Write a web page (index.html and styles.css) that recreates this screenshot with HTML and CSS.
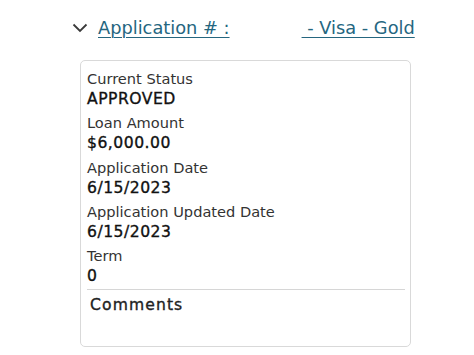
FILE: index.html
```html
<!DOCTYPE html>
<html lang="en">
<head>
    <meta charset="UTF-8">
    <meta name="viewport" content="width=device-width, initial-scale=1.0">
    <title>Application</title>
    <link rel="stylesheet" href="styles.css">
</head>
<body>
    <div class="page">
        <div class="app-header">
            <svg class="chevron" width="16" height="10" viewBox="0 0 16 10">
                <path d="M1.5 1.5 L8 8 L14.5 1.5" fill="none" stroke="#3a3a3a" stroke-width="1.8"/>
            </svg>
            <a class="app-link" href="#"><span class="ul">Application # :</span><span class="redacted"></span><span class="ul"> - Visa - Gold</span></a>
        </div>

        <div class="card">
            <div class="field">
                <div class="label">Current Status</div>
                <div class="value">APPROVED</div>
            </div>
            <div class="field">
                <div class="label">Loan Amount</div>
                <div class="value">$6,000.00</div>
            </div>
            <div class="field">
                <div class="label">Application Date</div>
                <div class="value">6/15/2023</div>
            </div>
            <div class="field">
                <div class="label">Application Updated Date</div>
                <div class="value">6/15/2023</div>
            </div>
            <div class="field">
                <div class="label">Term</div>
                <div class="value">0</div>
            </div>

            <div class="comments">
                <div class="comments-title">Comments</div>
            </div>
        </div>
    </div>
</body>
</html>
```

FILE: styles.css
```css
body {
    margin: 0;
    padding: 0;
    background: #ffffff;
    font-family: "DejaVu Sans", "Open Sans", sans-serif;
    color: #222;
}

.page {
    padding: 14px 0 0 72px;
}

.app-header {
    display: flex;
    align-items: center;
    gap: 10px;
    height: 26px;
}

.chevron {
    margin-top: 2px;
}

.app-link {
    color: #25667f;
    font-size: 17.8px;
    text-decoration: none;
}

.app-link .ul {
    text-decoration: underline;
    text-underline-offset: 3px;
    text-decoration-thickness: 1px;
}

.redacted {
    display: inline-block;
    width: 72px;
}

.card {
    margin: 20px 0 0 8px;
    width: 331px;
    height: 287px;
    border: 1.5px solid #d9d9d9;
    border-radius: 5px;
    padding: 7px 5px 0 6px;
    box-sizing: border-box;
}

.field {
    margin-bottom: 2.3px;
}

.label {
    font-size: 14.6px;
    line-height: 21px;
    color: #333;
}

.value {
    font-size: 15.6px;
    line-height: 21px;
    color: #111;
    -webkit-text-stroke: 0.35px #111;
    letter-spacing: 0.5px;
}

.comments {
    margin-top: 1px;
    border-top: 1.5px solid #d6d6d6;
    padding: 6px 0 0 3px;
}

.comments-title {
    font-size: 15.6px;
    color: #222;
    -webkit-text-stroke: 0.35px #222;
    letter-spacing: 1.1px;
}
```
